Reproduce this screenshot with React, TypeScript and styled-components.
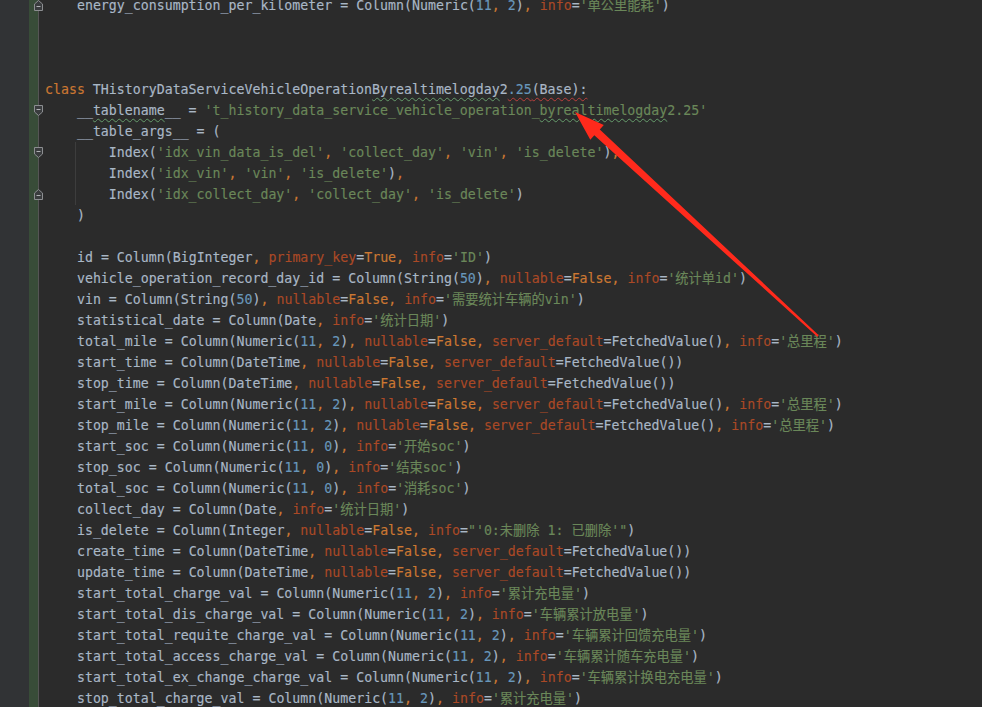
import styled, { createGlobalStyle } from "styled-components";

const GlobalStyle = createGlobalStyle`
   html, body {
      margin: 0;
      padding: 0;
      background: #2b2b2b;
   }
`;

const Colors = {
   bg: "#2b2b2b",
   gutter: "#313335",
   added: "#384c38",
   divider: "#555555",
   text: "#a9b7c6",
   keyword: "#cc7832",
   string: "#6a8759",
   number: "#6897bb",
   arg: "#aa4926",
   typo: "#659c6b",
   error: "#bc3f3c",
   guide: "#3d3d3d",
   arrow: "#ff2a1c",
};

const Page = styled.div`
   position: relative;
   width: 100%;
   height: 100vh;
   overflow: hidden;
   background: ${Colors.bg};
`;

const Lines = styled.div`
   display: flex;
   flex-direction: column;
   margin-top: -5px;
`;

const Row = styled.div`
   display: flex;
   height: 21px;
`;

const GutterCell = styled.div`
   width: 29px;
   flex-shrink: 0;
   background: ${Colors.gutter};
`;

const ChangeCell = styled.div`
   width: 9px;
   flex-shrink: 0;
   background: ${Colors.added};
`;

const DividerCell = styled.div`
   position: relative;
   width: 1px;
   flex-shrink: 0;
   background: ${Colors.divider};
`;

const FoldMark = styled.svg<{ $flip?: boolean }>`
   position: absolute;
   z-index: 2;
   left: -4px;
   top: 5px;
   width: 9px;
   height: 11px;
   overflow: visible;
   transform: ${(p) => (p.$flip ? "scaleY(-1)" : "none")};
`;

const CodeCell = styled.div<{ $guide?: boolean }>`
   flex: 1;
   padding-left: 6px;
   white-space: pre;
   font-family: "DejaVu Sans Mono", "Noto Sans CJK SC", monospace;
   font-size: 13.25px;
   line-height: 21px;
   color: ${Colors.text};
   -webkit-text-stroke: 0.15px currentColor;
   background-image: ${(p) =>
      p.$guide
         ? `linear-gradient(to right, transparent 36px, ${Colors.guide} 36px, ${Colors.guide} 37px, transparent 37px)`
         : "none"};
`;

const Token = styled.span<{ $kind: string; $wave?: string }>`
   color: ${(p) =>
      p.$kind === "kw" || p.$kind === "comma"
         ? Colors.keyword
         : p.$kind === "str"
         ? Colors.string
         : p.$kind === "num"
         ? Colors.number
         : p.$kind === "arg"
         ? Colors.arg
         : Colors.text};
   text-decoration: ${(p) =>
      p.$wave ? `underline wavy ${p.$wave === "err" ? Colors.error : Colors.typo}` : "none"};
   text-decoration-thickness: 1px;
   text-underline-offset: 3px;
`;

const ArrowLayer = styled.svg`
   position: absolute;
   left: 0;
   top: 0;
   width: 100%;
   height: 100%;
   pointer-events: none;
`;

type Tok = [string, string, string?];
type Line = string | Tok[];

const code: Line[] = [
   "    energy_consumption_per_kilometer = Column(Numeric(11, 2), info='单公里能耗')",
   "",
   "",
   "",
   [
      ["kw", "class"],
      ["def", " THistoryDataServiceVehicleOperation"],
      ["def", "Byrealtimelogday", "typo"],
      ["def", "2"],
      ["num", ".25", "err"],
      ["def", "(Base):", "err"],
   ],
   [
      ["def", "    __"],
      ["def", "tablename", "typo"],
      ["def", "__ = "],
      ["str", "'t_history_data_service_vehicle_operation_"],
      ["str", "byrealtimelogday", "typo"],
      ["str", "2.25'"],
   ],
   "    __table_args__ = (",
   "        Index('idx_vin_data_is_del', 'collect_day', 'vin', 'is_delete'),",
   "        Index('idx_vin', 'vin', 'is_delete'),",
   "        Index('idx_collect_day', 'collect_day', 'is_delete')",
   "    )",
   "",
   "    id = Column(BigInteger, primary_key=True, info='ID')",
   "    vehicle_operation_record_day_id = Column(String(50), nullable=False, info='统计单id')",
   "    vin = Column(String(50), nullable=False, info='需要统计车辆的vin')",
   "    statistical_date = Column(Date, info='统计日期')",
   "    total_mile = Column(Numeric(11, 2), nullable=False, server_default=FetchedValue(), info='总里程')",
   "    start_time = Column(DateTime, nullable=False, server_default=FetchedValue())",
   "    stop_time = Column(DateTime, nullable=False, server_default=FetchedValue())",
   "    start_mile = Column(Numeric(11, 2), nullable=False, server_default=FetchedValue(), info='总里程')",
   "    stop_mile = Column(Numeric(11, 2), nullable=False, server_default=FetchedValue(), info='总里程')",
   "    start_soc = Column(Numeric(11, 0), info='开始soc')",
   "    stop_soc = Column(Numeric(11, 0), info='结束soc')",
   "    total_soc = Column(Numeric(11, 0), info='消耗soc')",
   "    collect_day = Column(Date, info='统计日期')",
   "    is_delete = Column(Integer, nullable=False, info=\"'0:未删除 1: 已删除'\")",
   "    create_time = Column(DateTime, nullable=False, server_default=FetchedValue())",
   "    update_time = Column(DateTime, nullable=False, server_default=FetchedValue())",
   "    start_total_charge_val = Column(Numeric(11, 2), info='累计充电量')",
   "    start_total_dis_charge_val = Column(Numeric(11, 2), info='车辆累计放电量')",
   "    start_total_requite_charge_val = Column(Numeric(11, 2), info='车辆累计回馈充电量')",
   "    start_total_access_charge_val = Column(Numeric(11, 2), info='车辆累计随车充电量')",
   "    start_total_ex_change_charge_val = Column(Numeric(11, 2), info='车辆累计换电充电量')",
   "    stop_total_charge_val = Column(Numeric(11, 2), info='累计充电量')",
];

// fold markers in the gutter: "start" points down, "end" points up
const folds = new Map<number, "start" | "end">([
   [0, "end"],
   [5, "start"],
   [7, "start"],
   [9, "end"],
]);
const guides = [7, 8, 9];

const tokenRe = /('[^']*'|"[^"]*")|([A-Za-z_]\w*)(?==(?!=))|\b(class|True|False)\b|(\.?\d+(?:\.\d+)?)|(,)|([A-Za-z_]\w*|\s+|.)/g;

function tokenize(line: string): Tok[] {
   const out: Tok[] = [];
   let m: RegExpExecArray | null;
   tokenRe.lastIndex = 0;
   while ((m = tokenRe.exec(line))) {
      if (m[1]) out.push(["str", m[1]]);
      else if (m[2]) out.push(["arg", m[2]]);
      else if (m[3]) out.push(["kw", m[3]]);
      else if (m[4]) out.push(["num", m[4]]);
      else if (m[5]) out.push(["comma", m[5]]);
      else out.push(["def", m[6]]);
   }
   return out;
}

function Fold({ kind }: { kind: "start" | "end" }) {
   return (
      <FoldMark viewBox="0 0 9 11" $flip={kind === "end"}>
         <path d="M0.5 0.5 H8.5 V7 L4.5 10.5 L0.5 7 Z" fill="#3a3c3e" stroke="#8c8e91" strokeWidth="1" />
         <line x1="2.5" x2="6.5" y1="4.5" y2="4.5" stroke="#b0b2b4" strokeWidth="1" />
      </FoldMark>
   );
}

// tapered annotation arrow, tail near "总里程')" and tip at the tablename string
const tip = [575, 112];
const tail = [818, 336];
function arrowPoints() {
   const dx = tip[0] - tail[0];
   const dy = tip[1] - tail[1];
   const len = Math.hypot(dx, dy);
   const ux = dx / len, uy = dy / len;
   const nx = -uy, ny = ux;
   const headLen = 30, headW = 10, shaftW = 4, tailW = 1;
   const bx = tip[0] - ux * headLen, by = tip[1] - uy * headLen;
   const pts = [
      [tip[0], tip[1]],
      [bx + nx * headW, by + ny * headW],
      [bx + nx * shaftW, by + ny * shaftW],
      [tail[0] + nx * tailW, tail[1] + ny * tailW],
      [tail[0] - nx * tailW, tail[1] - ny * tailW],
      [bx - nx * shaftW, by - ny * shaftW],
      [bx - nx * headW, by - ny * headW],
   ];
   return pts.map((p) => p.map((v) => v.toFixed(1)).join(",")).join(" ");
}

export default function App() {
   return (
      <>
         <GlobalStyle />
         <Page>
            <Lines>
               {code.map((line, i) => {
                  const toks = typeof line === "string" ? tokenize(line) : line;
                  const fold = folds.get(i);
                  return (
                     <Row key={i}>
                        <GutterCell />
                        <ChangeCell />
                        <DividerCell>{fold && <Fold kind={fold} />}</DividerCell>
                        <CodeCell $guide={guides.includes(i)}>
                           {toks.length === 0 && " "}
                           {toks.map((t, j) => (
                              <Token key={j} $kind={t[0]} $wave={t[2]}>
                                 {t[1]}
                              </Token>
                           ))}
                        </CodeCell>
                     </Row>
                  );
               })}
            </Lines>
            <ArrowLayer viewBox="0 0 982 707" preserveAspectRatio="none">
               <polygon points={arrowPoints()} fill={Colors.arrow} />
            </ArrowLayer>
         </Page>
      </>
   );
}
